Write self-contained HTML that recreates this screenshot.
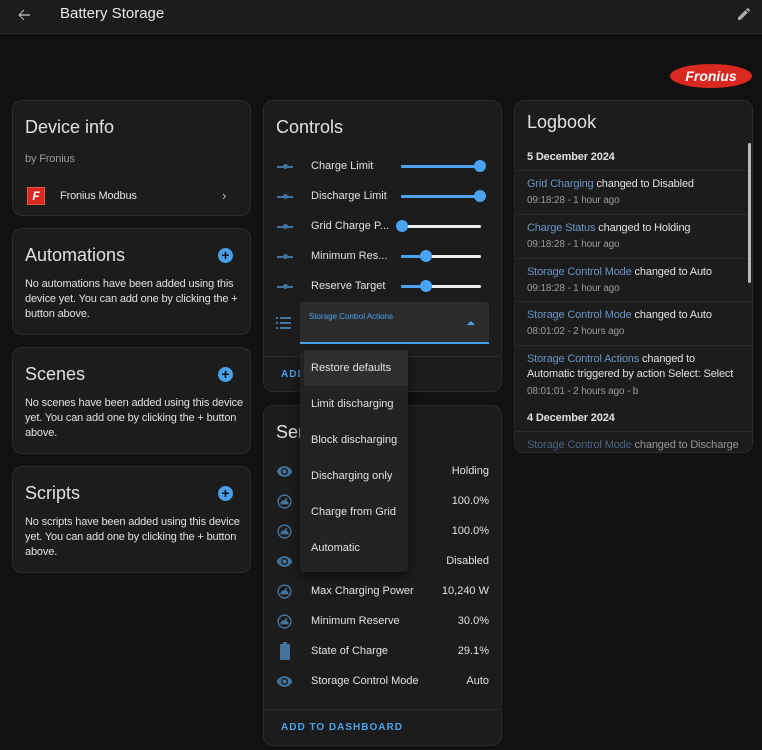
<!DOCTYPE html>
<html><head><meta charset="utf-8"><style>
*{box-sizing:border-box;margin:0;padding:0}
body{width:762px;height:750px;background:#111;font-family:"Liberation Sans",sans-serif;color:#e1e1e1;position:relative;overflow:hidden;font-size:11px}
.a{position:absolute}
.hdr{left:0;top:0;width:762px;height:34px;background:#1c1c1c;border-bottom:1px solid #2c2c2c}
.card{position:absolute;background:#1c1c1c;border:1px solid #2b2b2b;border-radius:10px}
.t{position:absolute;font-size:18px;color:#e1e1e1}
.p{position:absolute;font-size:11px;line-height:15px;color:#e1e1e1;letter-spacing:-0.15px}
.plus{position:absolute;width:15px;height:15px;border-radius:50%;background:#4a9fe8;color:#111;font-weight:bold;font-size:14px;line-height:15px;text-align:center}
.lk{color:#6a94c6}
.sub{color:#9a9a9a;font-size:10px}
.row{position:absolute;left:0;width:236px;border-top:1px solid #2b2b2b}
.trk{position:absolute;height:3px;background:#eee;border-radius:2px;left:401px;width:80px}
.fill{position:absolute;height:3px;background:#4aa3ef;border-radius:2px;left:401px}
.th{position:absolute;width:12px;height:12px;border-radius:50%;background:#4aa3ef}
.lbl{position:absolute;left:311px;font-size:11px}
.val{position:absolute;right:273px;font-size:11px;text-align:right}
.dd{position:absolute;left:311px;font-size:11px}
</style></head><body>
<div class="a hdr"></div>
<svg class="a" style="left:15px;top:6px" width="18" height="18" viewBox="0 0 24 24"><path d="M20 11.2H7l5.3-5.3-.9-.9L4.6 12l6.8 6.9.9-.9L7 12.8h13z" fill="#ccc"/></svg>
<div class="a" style="left:60px;top:5px;font-size:15px;color:#e8e8e8">Battery Storage</div>
<svg class="a" style="left:736px;top:6px" width="16" height="16" viewBox="0 0 24 24"><path d="M3 17.25V21h3.75L17.8 9.94l-3.75-3.75zM20.7 7.04a1 1 0 000-1.41l-2.34-2.34a1 1 0 00-1.41 0l-1.830 1.83 3.75 3.75z" fill="#aaa"/></svg>
<div class="a" style="left:670px;top:64px;width:82px;height:24px;border-radius:50%;background:#d8281f;color:#fff;font-style:italic;font-weight:bold;font-size:14px;text-align:center;line-height:24px">Fronius</div>

<div class="card" style="left:12px;top:100px;width:239px;height:116px"></div>
<div class="t" style="left:25px;top:117px">Device info</div>
<div class="p sub" style="left:25px;top:152px;font-size:11px">by Fronius</div>
<div class="a" style="left:27px;top:187px;width:18px;height:18px;background:#d8281f;border:1px solid #fff3;color:#fff;font-weight:bold;font-style:italic;font-size:12px;text-align:center;line-height:17px">F</div>
<div class="p" style="left:60px;top:189px">Fronius Modbus</div>
<div class="p" style="left:222px;top:188px;color:#bbb;font-size:13px">›</div>

<div class="card" style="left:12px;top:228px;width:239px;height:107px"></div>
<div class="t" style="left:25px;top:245px">Automations</div>
<div class="plus" style="left:218px;top:248px">+</div>
<div class="p" style="left:25px;top:277px;width:218px">No automations have been added using this device yet. You can add one by clicking the + button above.</div>

<div class="card" style="left:12px;top:347px;width:239px;height:107px"></div>
<div class="t" style="left:25px;top:364px">Scenes</div>
<div class="plus" style="left:218px;top:367px">+</div>
<div class="p" style="left:25px;top:396px;width:224px">No scenes have been added using this device yet. You can add one by clicking the + button above.</div>

<div class="card" style="left:12px;top:466px;width:239px;height:107px"></div>
<div class="t" style="left:25px;top:483px">Scripts</div>
<div class="plus" style="left:218px;top:486px">+</div>
<div class="p" style="left:25px;top:515px;width:224px">No scripts have been added using this device yet. You can add one by clicking the + button above.</div>

<div class="card" style="left:263px;top:100px;width:239px;height:292px"></div>
<div class="t" style="left:276px;top:117px">Controls</div>
<div class="a" style="left:277px;top:166px;width:16px;height:2px;background:#44739e"></div><div class="a" style="left:283px;top:164px;width:5px;height:5px;border-radius:50%;background:#44739e"></div>
<div class="lbl" style="top:160px">Charge Limit</div>
<div class="trk" style="top:165px"></div><div class="fill" style="top:165px;width:79px"></div><div class="th" style="left:474px;top:160px"></div>

<div class="a" style="left:277px;top:196px;width:16px;height:2px;background:#44739e"></div><div class="a" style="left:283px;top:194px;width:5px;height:5px;border-radius:50%;background:#44739e"></div>
<div class="lbl" style="top:190px">Discharge Limit</div>
<div class="trk" style="top:195px"></div><div class="fill" style="top:195px;width:79px"></div><div class="th" style="left:474px;top:190px"></div>

<div class="a" style="left:277px;top:226px;width:16px;height:2px;background:#44739e"></div><div class="a" style="left:283px;top:224px;width:5px;height:5px;border-radius:50%;background:#44739e"></div>
<div class="lbl" style="top:220px">Grid Charge P...</div>
<div class="trk" style="top:225px"></div><div class="th" style="left:396px;top:220px"></div>

<div class="a" style="left:277px;top:256px;width:16px;height:2px;background:#44739e"></div><div class="a" style="left:283px;top:254px;width:5px;height:5px;border-radius:50%;background:#44739e"></div>
<div class="lbl" style="top:250px">Minimum Res...</div>
<div class="trk" style="top:255px"></div><div class="fill" style="top:255px;width:25px"></div><div class="th" style="left:420px;top:250px"></div>

<div class="a" style="left:277px;top:286px;width:16px;height:2px;background:#44739e"></div><div class="a" style="left:283px;top:284px;width:5px;height:5px;border-radius:50%;background:#44739e"></div>
<div class="lbl" style="top:280px">Reserve Target</div>
<div class="trk" style="top:285px"></div><div class="fill" style="top:285px;width:25px"></div><div class="th" style="left:420px;top:280px"></div>

<svg class="a" style="left:276px;top:316px" width="16" height="14" viewBox="0 0 16 14"><g fill="#44739e"><rect x="0" y="1" width="2" height="2"/><rect x="0" y="6" width="2" height="2"/><rect x="0" y="11" width="2" height="2"/><rect x="4" y="1" width="11" height="2"/><rect x="4" y="6" width="11" height="2"/><rect x="4" y="11" width="11" height="2"/></g></svg>
<div class="a" style="left:300px;top:302px;width:189px;height:42px;background:#2c2c2c;border-radius:4px 4px 0 0;border-bottom:2px solid #4aa3ef"></div>
<div class="a" style="left:309px;top:312px;font-size:8px;color:#4aa3ef">Storage Control Actions</div>
<div class="a" style="left:467px;top:321px;width:0;height:0;border-left:4px solid transparent;border-right:4px solid transparent;border-bottom:4px solid #4aa3ef"></div>
<div class="a" style="left:263px;top:356px;width:239px;border-top:1px solid #2b2b2b"></div>
<div class="a" style="left:281px;top:369px;font-size:10px;color:#4aa3ef;letter-spacing:1px;font-weight:bold">ADD</div>

<div class="card" style="left:263px;top:405px;width:239px;height:341px"></div>
<div class="t" style="left:276px;top:422px">Ser</div>
<div class="a" style="left:263px;top:709px;width:239px;border-top:1px solid #2b2b2b"></div>
<div class="a" style="left:281px;top:722px;font-size:10px;color:#4aa3ef;letter-spacing:1px;font-weight:bold">ADD TO DASHBOARD</div>

<svg width="0" height="0" style="position:absolute"><defs>
<symbol id="eye" viewBox="0 0 24 24"><path d="M12 4.5C7 4.5 2.7 7.6 1 12c1.7 4.4 6 7.5 11 7.5s9.3-3.1 11-7.5c-1.7-4.4-6-7.5-11-7.5zM12 17a5 5 0 110-10 5 5 0 010 10zm0-8a3 3 0 100 6 3 3 0 000-6z" fill="#44739e"/></symbol>
<symbol id="gau" viewBox="0 0 24 24"><circle cx="12" cy="12" r="9" fill="none" stroke="#44739e" stroke-width="2"/><path d="M6 16a6 6 0 0112 0z" fill="#44739e"/><path d="M12 13l3-6" stroke="#44739e" stroke-width="2"/></symbol>
</defs></svg>
<svg class="a" style="left:276px;top:463px" width="17" height="17"><use href="#eye"/></svg>
<svg class="a" style="left:276px;top:493px" width="17" height="17"><use href="#gau"/></svg>
<svg class="a" style="left:276px;top:523px" width="17" height="17"><use href="#gau"/></svg>
<svg class="a" style="left:276px;top:553px" width="17" height="17"><use href="#eye"/></svg>
<svg class="a" style="left:276px;top:583px" width="17" height="17"><use href="#gau"/></svg>
<svg class="a" style="left:276px;top:613px" width="17" height="17"><use href="#gau"/></svg>
<div class="a" style="left:280px;top:644px;width:10px;height:16px;background:#44739e;border-radius:1px"></div><div class="a" style="left:283px;top:642px;width:4px;height:2px;background:#44739e"></div>
<svg class="a" style="left:276px;top:673px" width="17" height="17"><use href="#eye"/></svg>
<div class="val" style="top:465px">Holding</div>
<div class="val" style="top:495px">100.0%</div>
<div class="val" style="top:525px">100.0%</div>
<div class="val" style="top:555px">Disabled</div>
<div class="lbl" style="top:585px">Max Charging Power</div><div class="val" style="top:585px">10,240 W</div>
<div class="lbl" style="top:615px">Minimum Reserve</div><div class="val" style="top:615px">30.0%</div>
<div class="lbl" style="top:645px">State of Charge</div><div class="val" style="top:645px">29.1%</div>
<div class="lbl" style="top:675px">Storage Control Mode</div><div class="val" style="top:675px">Auto</div>

<div class="a" style="left:300px;top:350px;width:108px;height:222px;background:#222;border-radius:4px;box-shadow:0 4px 10px rgba(0,0,0,.6)"></div>
<div class="a" style="left:304px;top:350px;width:104px;height:36px;background:#2e2e2e"></div>
<div class="dd" style="top:362px">Restore defaults</div>
<div class="dd" style="top:398px">Limit discharging</div>
<div class="dd" style="top:434px">Block discharging</div>
<div class="dd" style="top:470px">Discharging only</div>
<div class="dd" style="top:506px">Charge from Grid</div>
<div class="dd" style="top:542px">Automatic</div>

<div class="card" style="left:514px;top:100px;width:239px;height:353px;overflow:hidden">
<div class="t" style="left:12px;top:11px">Logbook</div>
<div class="p" style="left:12px;top:49px;font-weight:bold">5 December 2024</div>
<div class="row" style="top:69px"></div>
<div class="p" style="left:12px;top:76px"><span class="lk">Grid Charging</span> changed to Disabled</div>
<div class="p sub" style="left:12px;top:92px">09:18:28 - 1 hour ago</div>
<div class="row" style="top:113px"></div>
<div class="p" style="left:12px;top:120px"><span class="lk">Charge Status</span> changed to Holding</div>
<div class="p sub" style="left:12px;top:136px">09:18:28 - 1 hour ago</div>
<div class="row" style="top:157px"></div>
<div class="p" style="left:12px;top:164px"><span class="lk">Storage Control Mode</span> changed to Auto</div>
<div class="p sub" style="left:12px;top:180px">09:18:28 - 1 hour ago</div>
<div class="row" style="top:200px"></div>
<div class="p" style="left:12px;top:207px"><span class="lk">Storage Control Mode</span> changed to Auto</div>
<div class="p sub" style="left:12px;top:223px">08:01:02 - 2 hours ago</div>
<div class="row" style="top:244px"></div>
<div class="p" style="left:12px;top:251px;width:220px"><span class="lk">Storage Control Actions</span> changed to<br>Automatic triggered by action Select: Select</div>
<div class="p sub" style="left:12px;top:283px">08:01:01 - 2 hours ago - b</div>
<div class="p" style="left:12px;top:310px;font-weight:bold">4 December 2024</div>
<div class="row" style="top:330px"></div>
<div class="p" style="left:12px;top:337px;opacity:.6"><span class="lk">Storage Control Mode</span> changed to Discharge</div>
<div class="a" style="left:233px;top:42px;width:3px;height:140px;background:#bbb;border-radius:2px"></div>
</div>
</body></html>
